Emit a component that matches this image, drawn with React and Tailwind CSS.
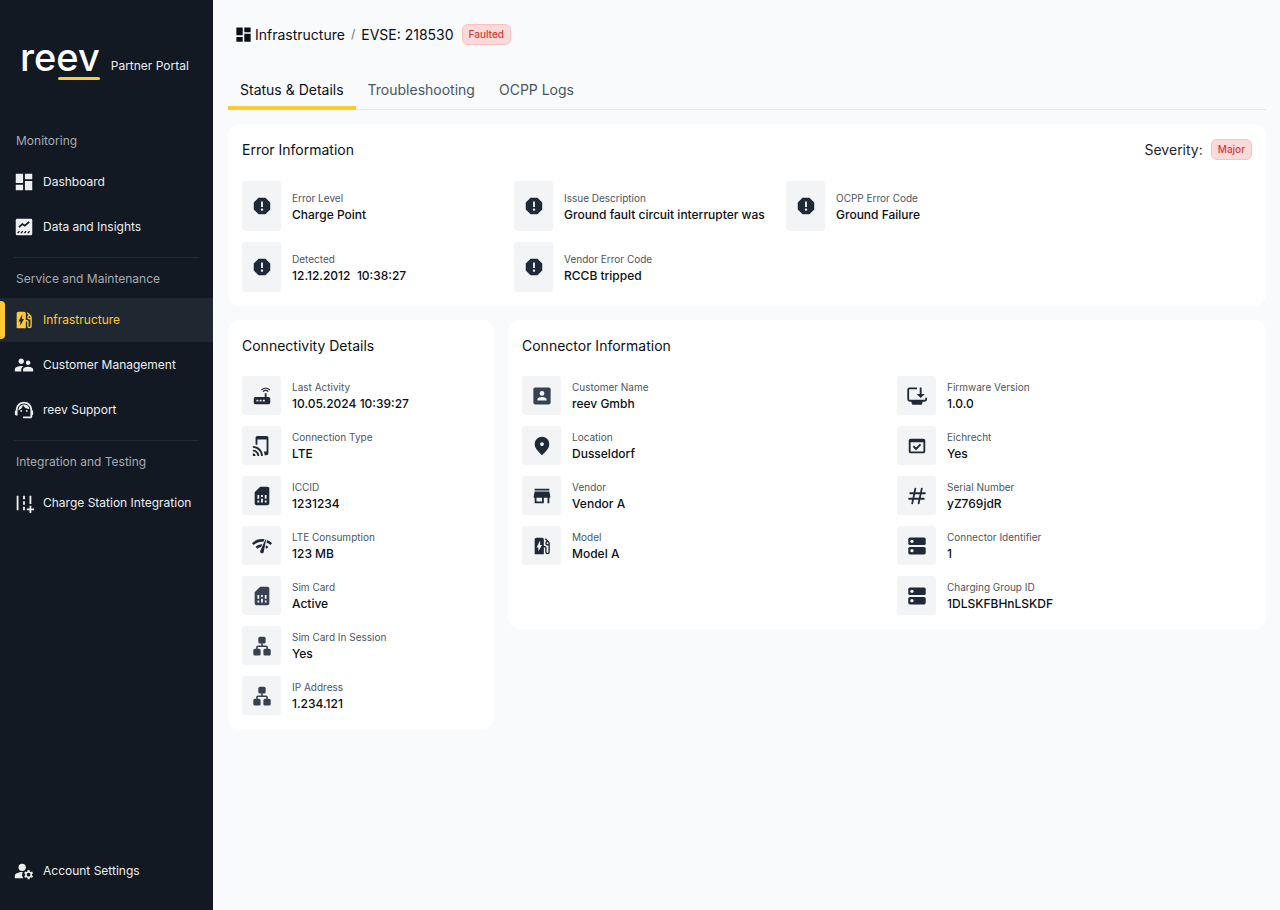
import {
  MdAddRoad,
  MdDashboard,
  MdDomainVerification,
  MdEvStation,
  MdManageAccounts,
  MdNetworkCheck,
  MdReport,
  MdRouter,
  MdSimCard,
  MdStore,
  MdSupervisorAccount,
  MdSupportAgent,
  MdTapAndPlay,
} from "react-icons/md";

function InsightsIcon({ className }) {
  return (
    <svg viewBox="0 0 24 24" className={className} aria-hidden="true">
      <rect x="3" y="3" width="18" height="18" rx="1.5" fill="currentColor" />
      <g fill="none" stroke="#121922">
        <path d="M6.5 12.2l3.8-3.4 2.6 1.8 4.8-4.3" strokeWidth="1.9" />
        <path d="M5 18.6l2-2M8.7 18.6l2-2M12.4 18.6l2-2M16.1 18.6l2-2" strokeWidth="1.4" />
      </g>
    </svg>
  );
}

function LanIcon({ className }) {
  return (
    <svg viewBox="0 0 24 24" className={className} aria-hidden="true">
      <g fill="currentColor">
        <rect x="8" y="2" width="8" height="7.4" rx="1.8" />
        <rect x="2.5" y="15" width="8" height="7.4" rx="1.8" />
        <rect x="13.5" y="15" width="8" height="7.4" rx="1.8" />
      </g>
      <path d="M12 9v3.2M6.5 15.5v-2.3a1 1 0 0 1 1-1h9a1 1 0 0 1 1 1v2.3" fill="none" stroke="currentColor" strokeWidth="1.7" />
    </svg>
  );
}

function ServerIcon({ className }) {
  return (
    <svg viewBox="0 0 24 24" className={className} aria-hidden="true">
      <g fill="currentColor">
        <rect x="2.5" y="2.8" width="19" height="8.2" rx="1.8" />
        <rect x="2.5" y="13" width="19" height="8.2" rx="1.8" />
      </g>
      <g fill="#f3f4f6">
        <circle cx="6.5" cy="6.9" r="1.8" />
        <circle cx="6.5" cy="17.1" r="1.8" />
      </g>
    </svg>
  );
}

function PinIcon({ className }) {
  return (
    <svg viewBox="0 0 24 24" className={className} aria-hidden="true">
      <path
        fill="currentColor"
        d="M12 12q.825 0 1.413-.587T14 10q0-.825-.587-1.412T12 8q-.825 0-1.412.588T10 10q0 .825.588 1.413T12 12m0 10q-4.025-3.425-6.012-6.362T4 10.2q0-3.75 2.413-5.975T12 2t5.588 2.225T20 10.2q0 2.5-1.987 5.438T12 22"
      />
    </svg>
  );
}

function PersonBoxIcon({ className }) {
  return (
    <svg viewBox="0 0 24 24" className={className} aria-hidden="true">
      <rect x="2.6" y="2.6" width="18.8" height="18.8" rx="2" fill="currentColor" />
      <g fill="#f3f4f6">
        <circle cx="12" cy="9.2" r="2.6" />
        <path d="M7 17v-1.2c0-1.7 3.3-2.6 5-2.6s5 .9 5 2.6V17z" />
      </g>
    </svg>
  );
}

function HashIcon({ className }) {
  return (
    <svg viewBox="0 0 24 24" className={className} aria-hidden="true">
      <path
        d="M10.2 4l-3.4 16M17.2 4l-3.4 16M4.6 9h16M3.4 15h16"
        fill="none"
        stroke="currentColor"
        strokeWidth="2"
        strokeLinecap="round"
      />
    </svg>
  );
}

function InstallIcon({ className }) {
  return (
    <svg viewBox="0 0 24 24" className={className} aria-hidden="true">
      <path
        d="M12 3.6H4a1.6 1.6 0 0 0-1.6 1.6v10.4A1.6 1.6 0 0 0 4 17.2h16.4a1.6 1.6 0 0 0 1.6-1.6v-1.8"
        fill="none"
        stroke="currentColor"
        strokeWidth="2"
      />
      <path d="M6 17h12v2.6l-1 2H7l-1-2z" fill="currentColor" />
      <path d="M15 2.6v7.2h-3.4L16 14.2l4.4-4.4H17V2.6z" fill="currentColor" />
    </svg>
  );
}

const sections = [
  {
    title: "Monitoring",
    items: [
      { label: "Dashboard", Icon: MdDashboard },
      { label: "Data and Insights", Icon: InsightsIcon },
    ],
  },
  {
    title: "Service and Maintenance",
    items: [
      { label: "Infrastructure", Icon: MdEvStation, active: true },
      { label: "Customer Management", Icon: MdSupervisorAccount },
      { label: "reev Support", Icon: MdSupportAgent },
    ],
  },
  {
    title: "Integration and Testing",
    items: [{ label: "Charge Station Integration", Icon: MdAddRoad }],
  },
];

const errors = [
  { label: "Error Level", value: "Charge Point", Icon: MdReport },
  { label: "Issue Description", value: "Ground fault circuit interrupter was", Icon: MdReport },
  { label: "OCPP Error Code", value: "Ground Failure", Icon: MdReport },
  { label: "Detected", value: "12.12.2012  10:38:27", Icon: MdReport },
  { label: "Vendor Error Code", value: "RCCB tripped", Icon: MdReport },
];

const connectivity = [
  { label: "Last Activity", value: "10.05.2024 10:39:27", Icon: MdRouter },
  { label: "Connection Type", value: "LTE", Icon: MdTapAndPlay },
  { label: "ICCID", value: "1231234", Icon: MdSimCard },
  { label: "LTE Consumption", value: "123 MB", Icon: MdNetworkCheck },
  { label: "Sim Card", value: "Active", Icon: MdSimCard, soft: true },
  { label: "Sim Card In Session", value: "Yes", Icon: LanIcon, soft: true },
  { label: "IP Address", value: "1.234.121", Icon: LanIcon, soft: true },
];

const connectorLeft = [
  { label: "Customer Name", value: "reev Gmbh", Icon: PersonBoxIcon, soft: true },
  { label: "Location", value: "Dusseldorf", Icon: PinIcon },
  { label: "Vendor", value: "Vendor A", Icon: MdStore },
  { label: "Model", value: "Model A", Icon: MdEvStation },
];

const connectorRight = [
  { label: "Firmware Version", value: "1.0.0", Icon: InstallIcon },
  { label: "Eichrecht", value: "Yes", Icon: MdDomainVerification },
  { label: "Serial Number", value: "yZ769jdR", Icon: HashIcon },
  { label: "Connector Identifier", value: "1", Icon: ServerIcon },
  { label: "Charging Group ID", value: "1DLSKFBHnLSKDF", Icon: ServerIcon },
];

function NavItem({ label, Icon, active }) {
  return (
    <a
      href="#"
      aria-current={active ? "page" : undefined}
      className={
        active
          ? "relative flex h-11 items-center gap-2 bg-[#1f2730] pl-[13px] text-[#ffc933]"
          : "relative flex h-11 items-center gap-2 pl-[13px] text-[#eceef0]"
      }
    >
      {active && <span className="absolute inset-y-[3px] left-0 w-[5px] rounded-r bg-[#ffc933]" />}
      <Icon className="size-[22px] shrink-0" />
      <span className="text-[12px] leading-5 whitespace-nowrap">{label}</span>
    </a>
  );
}

function Detail({ label, value, Icon, soft, tall }) {
  return (
    <div className="flex items-stretch gap-[11px]">
      <div
        className={
          tall
            ? "flex h-[50px] w-[39px] shrink-0 items-center justify-center rounded-[3px] bg-[#f3f4f6]"
            : "flex h-[39px] w-[39px] shrink-0 items-center justify-center rounded-[3px] bg-[#f3f4f6]"
        }
      >
        <Icon className={soft ? "size-[22px] text-[#374151]" : "size-[22px] text-[#1f2937]"} />
      </div>
      <dl className="flex flex-col justify-center whitespace-nowrap">
        <dt className="text-[10px] leading-4 text-[#4b5563]">{label}</dt>
        <dd className="text-[12px] leading-[17px] font-medium whitespace-pre text-[#0b0f19]">{value}</dd>
      </dl>
    </div>
  );
}

function Badge({ children }) {
  return (
    <span className="flex h-[21px] items-center rounded-md border border-[#fbbfc0] bg-[#fcdada] px-1.5 text-[10px] font-medium text-[#d63a3a]">
      {children}
    </span>
  );
}

function DetailList({ items }) {
  return (
    <div className="flex flex-col gap-[11px]">
      {items.map((d) => (
        <Detail key={d.label} {...d} />
      ))}
    </div>
  );
}

const heading = "pt-px text-[14px] leading-[22px] text-[#0b0f19]";

export default function App() {
  return (
    <div className="flex min-h-screen bg-[#f9fafc] font-[Inter,sans-serif]">
      <aside className="flex w-[213px] shrink-0 flex-col bg-[#121922] pb-[17px]">
        <div className="flex h-[120px] items-start gap-[11px] pt-[41px] pl-5">
          <div className="flex flex-col">
            <span className="text-[38px] leading-8 font-medium text-white">reev</span>
            <span className="mt-1 h-[3px] w-[42px] self-end rounded-full bg-[#ffc933]" />
          </div>
          <span className="pt-[15px] text-[12px] leading-5 whitespace-nowrap text-[#eceef0]">Partner Portal</span>
        </div>
        <nav className="flex flex-col">
          {sections.map((s, i) => (
            <section key={s.title}>
              {i > 0 && <hr className="mx-3.5 mt-2 border-[#222a34]" />}
              <h2 className="flex h-10 items-center pt-0.5 pl-4 text-[12px] text-[#a5abb3]">{s.title}</h2>
              <div className="flex flex-col gap-px">
                {s.items.map((item) => (
                  <NavItem key={item.label} {...item} />
                ))}
              </div>
            </section>
          ))}
        </nav>
        <div className="mt-auto">
          <NavItem label="Account Settings" Icon={MdManageAccounts} />
        </div>
      </aside>

      <main className="min-w-0 flex-1 pt-[23px] pr-3.5 pl-[15px]">
        <div className="flex h-[22px] items-center pl-1.5 text-[14px] text-[#0b0f19]">
          <MdDashboard className="mr-0.5 size-[19px]" />
          <a href="#">Infrastructure</a>
          <span className="mx-1.5 text-[12px] text-[#6b7280]">/</span>
          <span className="mr-2">EVSE: 218530</span>
          <Badge>Faulted</Badge>
        </div>

        <div role="tablist" className="mt-6 flex h-[41px] border-b border-[#e5e7eb] text-[14px] text-[#4b5563]">
          <button role="tab" aria-selected="true" className="-mb-px border-b-4 border-[#ffc933] px-3 pt-1 text-[#0b0f19]">
            Status &amp; Details
          </button>
          <button role="tab" aria-selected="false" className="-mb-px border-b-4 border-transparent px-3 pt-1">
            Troubleshooting
          </button>
          <button role="tab" aria-selected="false" className="-mb-px border-b-4 border-transparent px-3 pt-1">
            OCPP Logs
          </button>
        </div>

        <section className="mt-3.5 rounded-xl bg-white p-3.5">
          <div className="flex items-center justify-between">
            <h2 className={heading}>Error Information</h2>
            <div className="flex items-center gap-2 text-[14px] text-[#1f2430]">
              Severity: <Badge>Major</Badge>
            </div>
          </div>
          <div className="mt-5 grid grid-cols-[repeat(auto-fill,256px)] gap-x-4 gap-y-[11px]">
            {errors.map((d) => (
              <Detail key={d.label} tall {...d} />
            ))}
          </div>
        </section>

        <div className="mt-3.5 grid grid-cols-[266fr_758fr] items-start gap-3.5">
          <section className="rounded-xl bg-white p-3.5">
            <h2 className={heading}>Connectivity Details</h2>
            <div className="mt-[19px]">
              <DetailList items={connectivity} />
            </div>
          </section>
          <section className="rounded-xl bg-white p-3.5">
            <h2 className={heading}>Connector Information</h2>
            <div className="mt-[19px] grid grid-cols-2 gap-5">
              <DetailList items={connectorLeft} />
              <DetailList items={connectorRight} />
            </div>
          </section>
        </div>
      </main>
    </div>
  );
}
